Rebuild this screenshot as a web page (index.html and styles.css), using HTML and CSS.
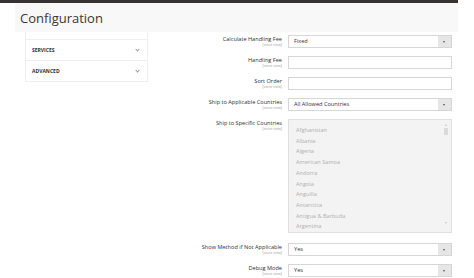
FILE: index.html
```html
<!DOCTYPE html>
<html lang="en">
  <head>
    <meta charset="UTF-8" />
    <title>Configuration</title>
    <link rel="stylesheet" href="styles.css">
  </head>
  <body>
    <div class="topbar"></div>
    <div class="page-header">
      <h1 class="page-title">Configuration</h1>
    </div>
    <div class="main">
      <div class="sidebar">
        <div class="nav-item nav-cut"></div>
        <div class="nav-item">SERVICES <span class="chev"></span></div>
        <div class="nav-item">ADVANCED <span class="chev"></span></div>
      </div>
      <div class="form">
        <div class="row">
          <div class="label">Calculate Handling Fee<span class="scope">[store view]</span></div>
          <div class="select">Fixed<span class="arrow"></span></div>
        </div>
        <div class="row">
          <div class="label">Handling Fee<span class="scope">[store view]</span></div>
          <div class="input"></div>
        </div>
        <div class="row">
          <div class="label">Sort Order<span class="scope">[store view]</span></div>
          <div class="input"></div>
        </div>
        <div class="row">
          <div class="label">Ship to Applicable Countries<span class="scope">[store view]</span></div>
          <div class="select">All Allowed Countries<span class="arrow"></span></div>
        </div>
        <div class="row row-multi">
          <div class="label">Ship to Specific Countries<span class="scope">[store view]</span></div>
          <div class="multi">
            <div class="opt">Afghanistan</div>
            <div class="opt">Albania</div>
            <div class="opt">Algeria</div>
            <div class="opt">American Samoa</div>
            <div class="opt">Andorra</div>
            <div class="opt">Angola</div>
            <div class="opt">Anguilla</div>
            <div class="opt">Antarctica</div>
            <div class="opt">Antigua &amp; Barbuda</div>
            <div class="opt">Argentina</div>
            <div class="scrollbar">
              <span class="sb-up"></span>
              <span class="sb-thumb"></span>
              <span class="sb-down"></span>
            </div>
          </div>
        </div>
        <div class="row">
          <div class="label">Show Method if Not Applicable<span class="scope">[store view]</span></div>
          <div class="select">Yes<span class="arrow"></span></div>
        </div>
        <div class="row">
          <div class="label">Debug Mode<span class="scope">[store view]</span></div>
          <div class="select">Yes<span class="arrow"></span></div>
        </div>
      </div>
    </div>
  </body>
</html>
```

FILE: styles.css
```css
body {
  margin: 0;
  font-family: "Open Sans", "Liberation Sans", sans-serif;
  background: #fff;
  color: #303030;
}

.topbar {
  width: 458px;
  height: 3px;
  background: #373330;
}

.page-header {
  margin-left: 15px;
  width: 438px;
  height: 29px;
  padding-left: 5px;
  background: #f8f8f8;
  display: flex;
  align-items: center;
}

.page-title {
  margin: 0;
  font-size: 13px;
  font-weight: 400;
  color: #41362f;
}

.main {
  display: flex;
}

.sidebar {
  margin-left: 25px;
  width: 121px;
  border: 1px solid #eeeeee;
  border-top: none;
  align-self: flex-start;
}

.nav-item {
  height: 20px;
  padding: 0 8px 0 6px;
  border-top: 1px solid #eeeeee;
  display: flex;
  align-items: center;
  justify-content: space-between;
  font-size: 5px;
  font-weight: 700;
  color: #303030;
}

.nav-cut {
  height: 7px;
  border-top: none;
}

.chev {
  width: 2px;
  height: 2px;
  border-right: 1px solid #999;
  border-bottom: 1px solid #999;
  transform: rotate(45deg);
  margin-top: -2px;
}

.form {
  margin-left: 0;
  padding-top: 3px;
  display: flex;
  flex-direction: column;
  gap: 8px;
}

.row {
  display: grid;
  grid-template-columns: 134px 164px;
  column-gap: 6px;
}

.row-multi {
  margin-bottom: 2px;
}

.label {
  text-align: right;
  font-size: 5.6px;
  line-height: 7px;
  padding-top: 1px;
  color: #303030;
}

.scope {
  display: block;
  font-size: 3.6px;
  line-height: 4px;
  color: #9a9a9a;
}

.input,
.select {
  position: relative;
  height: 11px;
  border: 1px solid #d6d6d6;
  background: #fff;
  font-size: 5.6px;
  line-height: 11px;
  padding-left: 5px;
  color: #303030;
}

.arrow {
  position: absolute;
  top: 0;
  right: 0;
  width: 13px;
  height: 11px;
  background: #e6e6e6;
}

.arrow::after {
  content: "";
  position: absolute;
  left: 5px;
  top: 5px;
  border-left: 1.5px solid transparent;
  border-right: 1.5px solid transparent;
  border-top: 2px solid #555;
}

.multi {
  position: relative;
  height: 112px;
  border: 1px solid #e0e0e0;
  background: #f3f3f3;
  padding: 5px 0 0 7px;
  box-sizing: border-box;
  height: 114px;
}

.opt {
  font-size: 5.6px;
  line-height: 10.7px;
  color: #b0b0b0;
}

.scrollbar {
  position: absolute;
  top: 2px;
  right: 2px;
  bottom: 2px;
  width: 5px;
}

.sb-up,
.sb-down {
  position: absolute;
  left: 1px;
  border-left: 1.5px solid transparent;
  border-right: 1.5px solid transparent;
}

.sb-up {
  top: 2px;
  border-bottom: 2px solid #c8c8c8;
}

.sb-down {
  bottom: 6px;
  border-top: 2px solid #c8c8c8;
}

.sb-thumb {
  position: absolute;
  top: 6px;
  left: 0;
  width: 4px;
  height: 7px;
  background: #dadada;
}
```
